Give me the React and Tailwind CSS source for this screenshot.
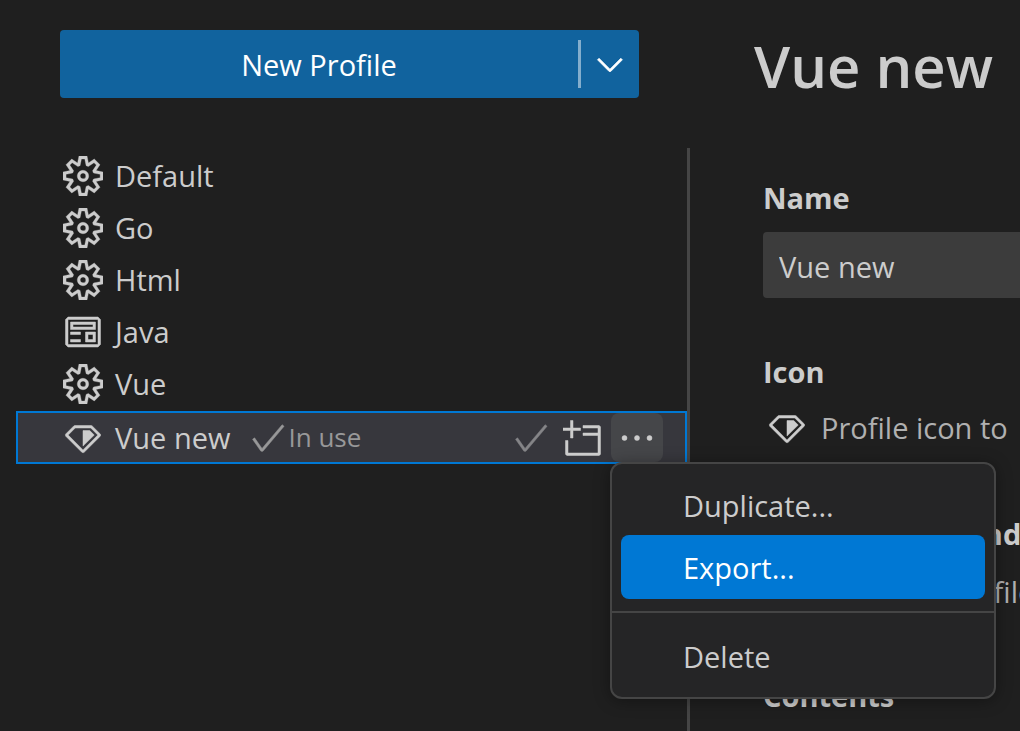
import {
  VscCheck,
  VscChevronDown,
  VscEllipsis,
  VscEmptyWindow,
  VscPreview,
  VscRuby,
  VscSettingsGear,
} from 'react-icons/vsc';

const profiles = [
  { name: 'Default', icon: VscSettingsGear },
  { name: 'Go', icon: VscSettingsGear },
  { name: 'Html', icon: VscSettingsGear },
  { name: 'Java', icon: VscPreview },
  { name: 'Vue', icon: VscSettingsGear },
  { name: 'Vue new', icon: VscRuby, active: true },
];

function NewProfileButton() {
  return (
    <div className="flex h-[68px] items-center rounded-sm bg-[#11639e] text-white">
      <button type="button" className="h-full flex-1 pt-[2px]">
        New Profile
      </button>
      <div className="h-12 w-[3px] bg-[#84aecd]" />
      <button type="button" aria-label="More options" className="flex h-full w-[58px] items-center justify-center">
        <VscChevronDown strokeWidth={0.3} className="size-10" />
      </button>
    </div>
  );
}

function ContextMenu() {
  return (
    <div
      role="menu"
      className="absolute top-full -left-px z-10 w-[386px] rounded-xl border-2 border-[#454545] bg-[#252526] pt-[9px] pb-[10px] shadow-[0_2px_16px_rgba(0,0,0,0.36)]"
    >
      <div className="flex flex-col px-[9px]">
        <button type="button" role="menuitem" className="h-[62px] rounded-lg pt-1 pl-[62px] text-left">
          Duplicate...
        </button>
        <button type="button" role="menuitem" className="h-16 rounded-lg bg-[#0078d4] pt-[2px] pl-[62px] text-left text-white">
          Export...
        </button>
      </div>
      <div className="mt-3 mb-3 h-[2px] bg-[#454545]" />
      <div className="flex flex-col px-[9px]">
        <button type="button" role="menuitem" className="h-[62px] rounded-lg pt-[2px] pl-[62px] text-left">
          Delete
        </button>
      </div>
    </div>
  );
}

function ProfileRow({ profile }) {
  const Icon = profile.icon;

  if (!profile.active) {
    return (
      <li className="flex h-[52px] items-center pl-[47px]">
        <Icon strokeWidth={0.2} className="mr-3 size-10 shrink-0" />
        <span>{profile.name}</span>
      </li>
    );
  }

  return (
    <li className="mt-px flex h-[53px] items-center border-2 border-[#0078d4] bg-[#37373d] pr-[22px] pl-[45px] whitespace-nowrap">
      <Icon strokeWidth={0.2} className="mr-3 size-10 shrink-0" />
      <span>{profile.name}</span>
      <span className="ml-[18px] flex items-center text-[26px] text-[#989899]">
        <VscCheck strokeWidth={0.2} className="size-10 shrink-0" />
        In use
      </span>
      <div className="ml-auto flex items-center gap-2 self-stretch">
        <button type="button" aria-label="Use this profile" className="mr-1 text-[#858588]">
          <VscCheck strokeWidth={0.2} className="size-10" />
        </button>
        <button type="button" aria-label="New window">
          <VscEmptyWindow strokeWidth={0.2} className="size-10" />
        </button>
        <div className="relative self-stretch">
          <button
            type="button"
            aria-label="More actions"
            className="flex h-full w-[52px] items-center justify-center rounded-lg bg-[#454649]"
          >
            <VscEllipsis strokeWidth={0.2} className="size-10" />
          </button>
          <ContextMenu />
        </div>
      </div>
    </li>
  );
}

function ProfileDetails() {
  return (
    <div className="min-w-0 pt-7 pl-[73px] whitespace-nowrap">
      <label htmlFor="profile-name" className="block h-11 leading-11 font-bold">
        Name
      </label>
      <input
        id="profile-name"
        type="text"
        defaultValue="Vue new"
        className="mt-3 h-[66px] w-full rounded-l-sm bg-[#3c3c3c] px-4 pt-[2px]"
      />
      <h2 className="mt-[52px] h-11 leading-11 font-bold">Icon</h2>
      <div className="mt-3 flex h-11 items-center gap-[14px] pl-1">
        <VscRuby strokeWidth={0.2} className="size-10 shrink-0" />
        <span className="text-[#b0b0b0]">Profile icon to</span>
      </div>
      <h2 className="mt-[62px] h-11 leading-11 font-bold">Use for New Windows</h2>
      <div className="mt-[14px] flex h-11 items-center gap-5 pl-1 text-[#b0b0b0]">
        <input id="new-windows" type="checkbox" className="size-11 shrink-0" />
        <label htmlFor="new-windows">Use this profile as the default for new windows</label>
      </div>
      <h2 className="mt-[60px] h-11 leading-11 font-bold">Contents</h2>
    </div>
  );
}

export default function App() {
  return (
    <div className="grid h-screen grid-cols-[minmax(0,23fr)_minmax(0,11fr)] grid-rows-[148px_1fr] overflow-hidden bg-[#1f1f1f] font-['Open_Sans','Segoe_UI',sans-serif] text-[29px] text-[#cccccc]">
      <div className="pt-[30px] pr-[51px] pl-[60px]">
        <NewProfileButton />
      </div>
      <div className="pt-[26px] pl-16">
        <h1 className="text-[58px] leading-20 font-semibold whitespace-nowrap">Vue new</h1>
      </div>
      <div className="border-r-[3px] border-[#454545]">
        <ul className="pt-[2px] pl-4">
          {profiles.map((profile) => (
            <ProfileRow key={profile.name} profile={profile} />
          ))}
        </ul>
      </div>
      <ProfileDetails />
    </div>
  );
}
